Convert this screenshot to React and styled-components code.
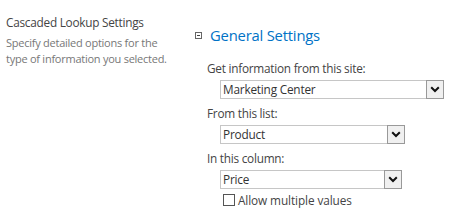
import React from "react";
import styled, { createGlobalStyle } from "styled-components";

const GlobalStyle = createGlobalStyle`
  body {
    margin: 0;
    background: #fff;
    font-family: "Open Sans", "Liberation Sans", sans-serif;
  }
`;

const fields = [
  { label: "Get information from this site:", value: "Marketing Center", width: 224 },
  { label: "From this list:", value: "Product", width: 185 },
  { label: "In this column:", value: "Price", width: 182 },
];

const Chevron = () => (
  <svg width="10" height="7" viewBox="0 0 10 7">
    <polyline points="1.2,1.2 5,5 8.8,1.2" fill="none" stroke="#111" strokeWidth="2" />
  </svg>
);

const App = () => {
  return (
    <>
      <GlobalStyle />
      <Page>
        <Aside>
          <Title>Cascaded Lookup Settings</Title>
          <Description>
            Specify detailed options for the type of information you selected.
          </Description>
        </Aside>
        <Main>
          <SectionHeader>
            <Toggle>
              <span />
            </Toggle>
            <SectionTitle>General Settings</SectionTitle>
          </SectionHeader>
          <Fields>
            {fields.map((f) => (
              <Field key={f.label}>
                <Label>{f.label}</Label>
                <Select style={{ width: f.width }}>
                  <SelectValue>{f.value}</SelectValue>
                  <ArrowBox>
                    <Chevron />
                  </ArrowBox>
                </Select>
              </Field>
            ))}
            <CheckRow>
              <Checkbox />
              <CheckLabel>Allow multiple values</CheckLabel>
            </CheckRow>
          </Fields>
        </Main>
      </Page>
    </>
  );
};

const Page = styled.div`
  display: flex;
  align-items: flex-start;
  width: 474px;
  height: 215px;
  overflow: hidden;
`;

const Aside = styled.div`
  width: 183px;
  padding: 14px 0 0 6px;
  box-sizing: content-box;
`;

const Title = styled.div`
  font-size: 11.8px;
  letter-spacing: -0.25px;
  line-height: 16px;
  color: #444;
`;

const Description = styled.div`
  margin-top: 5px;
  font-size: 11px;
  letter-spacing: -0.25px;
  line-height: 16px;
  color: #777;
  width: 165px;
`;

const Main = styled.div`
  display: flex;
  flex-direction: column;
  padding-top: 25px;
`;

const SectionHeader = styled.div`
  display: flex;
  align-items: center;
  gap: 8px;
  height: 20px;
  margin-left: 6px;
`;

const Toggle = styled.div`
  width: 5px;
  height: 5px;
  border: 1px solid #666;
  display: flex;
  align-items: center;
  justify-content: center;
  span {
    width: 3px;
    height: 1px;
    background: #444;
  }
`;

const SectionTitle = styled.div`
  font-size: 14.8px;
  letter-spacing: -0.2px;
  line-height: 20px;
  color: #0072c6;
`;

const Fields = styled.div`
  display: flex;
  flex-direction: column;
  margin-left: 18px;
  margin-top: 15px;
`;

const Field = styled.div`
  display: flex;
  flex-direction: column;
  margin-bottom: 6px;
`;

const Label = styled.div`
  font-size: 11.8px;
  letter-spacing: -0.25px;
  line-height: 16px;
  color: #444;
  margin-bottom: 4px;
`;

const Select = styled.div`
  display: flex;
  align-items: stretch;
  height: 19px;
  margin-left: 13px;
  border: 1px solid #c6c6c6;
  box-sizing: border-box;
`;

const SelectValue = styled.div`
  flex: 1;
  font-size: 11.8px;
  letter-spacing: -0.2px;
  line-height: 17px;
  color: #333;
  padding-left: 2px;
`;

const ArrowBox = styled.div`
  width: 16px;
  margin: -1px -1px -1px 0;
  border: 1px solid #999;
  background: #f0f0f0;
  display: flex;
  align-items: center;
  justify-content: center;
`;

const CheckRow = styled.div`
  display: flex;
  align-items: center;
  gap: 3px;
  height: 14px;
  margin: -2px 0 0 16px;
`;

const Checkbox = styled.div`
  width: 10px;
  height: 10px;
  border: 1px solid #555;
  background: #fff;
`;

const CheckLabel = styled.div`
  font-size: 11.8px;
  letter-spacing: -0.1px;
  line-height: 14px;
  color: #444;
`;

export default App;
